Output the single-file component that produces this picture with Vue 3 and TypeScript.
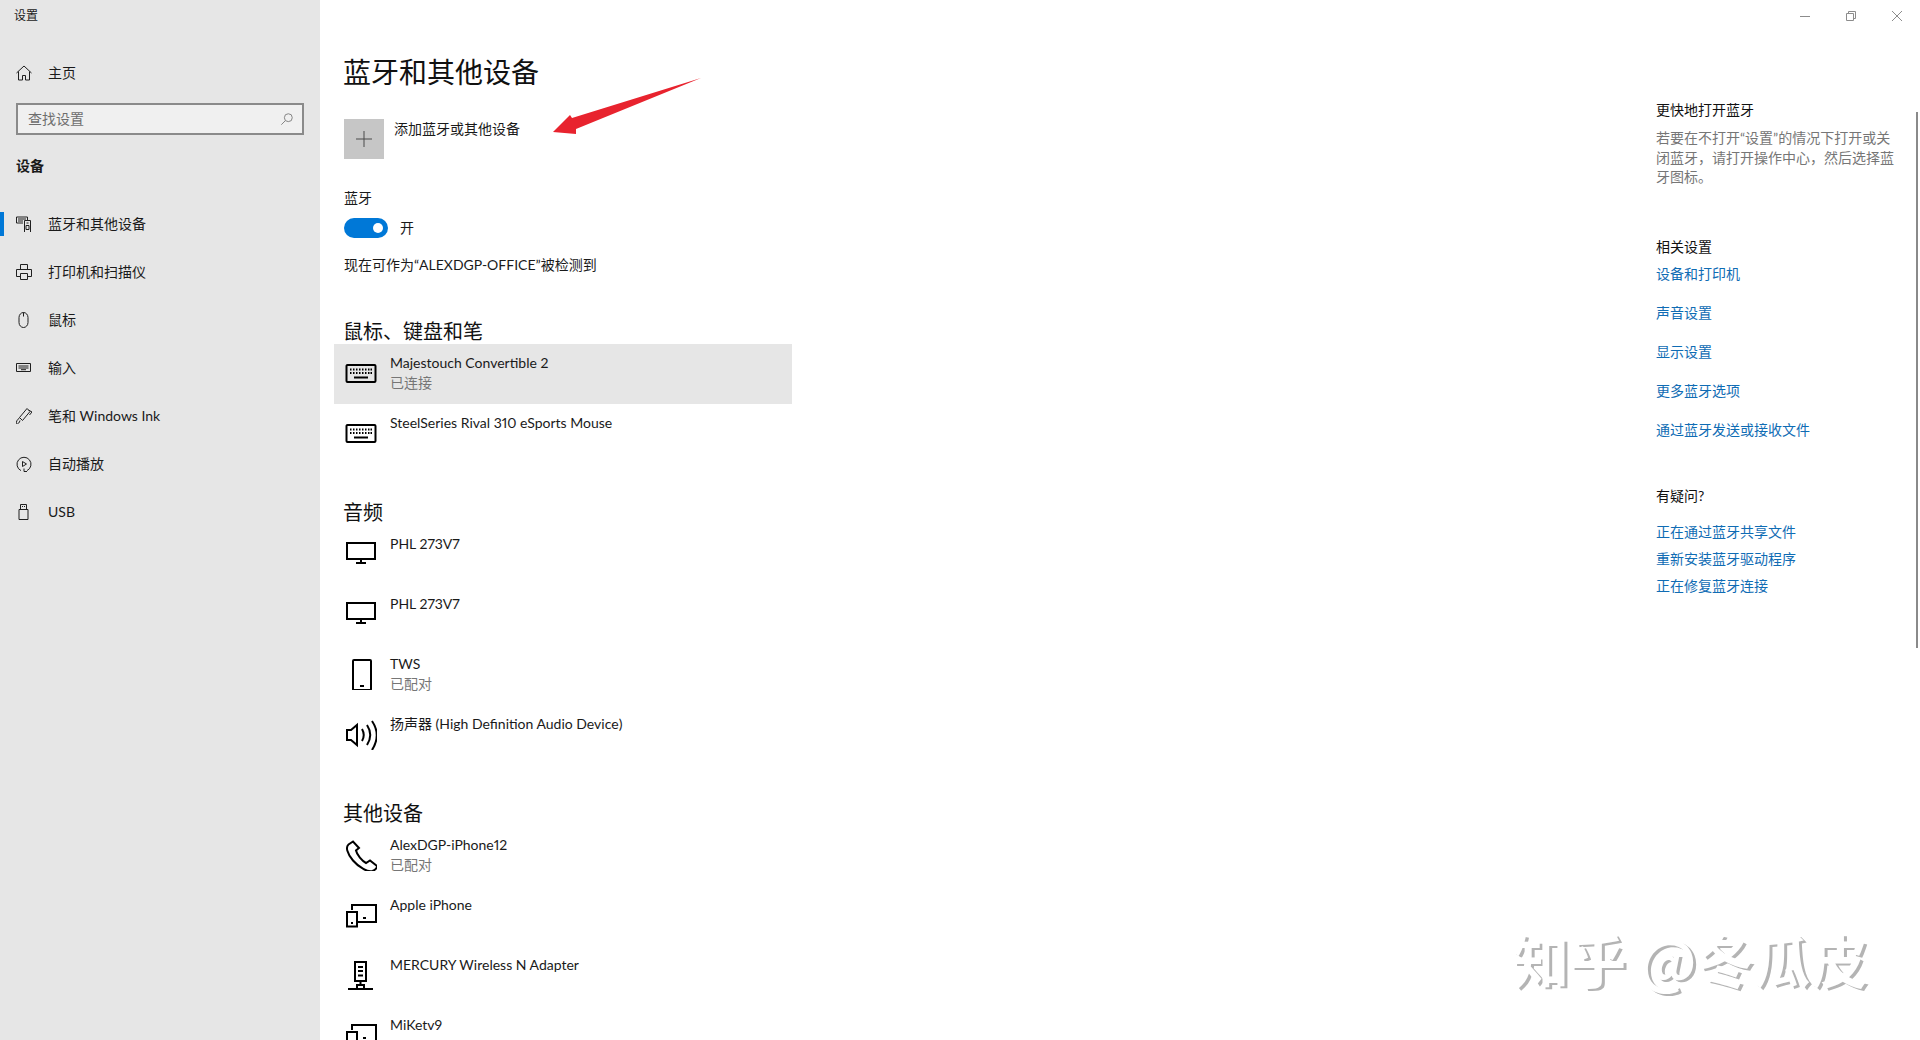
<template>
  <div class="window">
    <!-- 左侧导航 -->
    <aside class="sidebar">
      <div class="app-title">设置</div>
      <div class="nav-row home-row">
        <svg class="nav-icon" viewBox="0 0 16 16"><path v-for="d in navIcons.home" :key="d" :d="d" /></svg>
        <span>主页</span>
      </div>
      <div class="search-box">
        <input class="search-input" type="text" placeholder="查找设置" />
        <svg class="search-icon" viewBox="0 0 16 16">
          <circle cx="9.5" cy="6.5" r="4.5" />
          <path d="M6 10l-4.5 4.5" />
        </svg>
      </div>
      <div class="nav-group">设备</div>
      <nav class="nav-list">
        <div v-for="item in navItems" :key="item.label" :class="['nav-row', { 'nav-row--active': item.active }]">
          <svg class="nav-icon" viewBox="0 0 16 16"><path v-for="d in navIcons[item.icon]" :key="d" :d="d" /></svg>
          <span>{{ item.label }}</span>
        </div>
      </nav>
    </aside>

    <div class="content">
      <!-- 窗口按钮 -->
      <div class="caption">
        <div class="caption-btn"><svg viewBox="0 0 10 10"><path d="M0 5.5h10" /></svg></div>
        <div class="caption-btn"><svg viewBox="0 0 10 10"><path d="M.5 2.5h7v7h-7zM2.5 2.5v-2h7v7h-2" /></svg></div>
        <div class="caption-btn"><svg viewBox="0 0 10 10"><path d="M0 0l10 10M10 0L0 10" /></svg></div>
      </div>

      <div class="body">
        <main class="main">
          <h1 class="page-title">蓝牙和其他设备</h1>
          <div class="add-row">
            <div class="add-tile"><svg viewBox="0 0 16 16"><path d="M8 0v16M0 8h16" /></svg></div>
            <span>添加蓝牙或其他设备</span>
          </div>
          <div class="bt-label">蓝牙</div>
          <div class="toggle-row">
            <span class="toggle"><span class="toggle-knob"></span></span>
            <span>开</span>
          </div>
          <div class="discover">现在可作为“ALEXDGP-OFFICE”被检测到</div>

          <section v-for="group in groups" :key="group.title" class="group">
            <h2 class="group-title">{{ group.title }}</h2>
            <div
              v-for="(dev, i) in group.devices"
              :key="group.title + i"
              :class="['device', { 'device--selected': dev.selected }]"
            >
              <svg class="device-icon" viewBox="0 0 32 32"><path v-for="d in deviceIcons[dev.icon]" :key="d" :d="d" /></svg>
              <div class="device-text">
                <div>{{ dev.name }}</div>
                <div v-if="dev.status" class="device-status">{{ dev.status }}</div>
              </div>
            </div>
          </section>
        </main>

        <!-- 右侧相关信息 -->
        <aside class="side-info">
          <h3 class="info-title">更快地打开蓝牙</h3>
          <p class="info-desc">若要在不打开“设置”的情况下打开或关闭蓝牙，请打开操作中心，然后选择蓝牙图标。</p>
          <h3 class="info-title related-title">相关设置</h3>
          <a v-for="l in relatedLinks" :key="l" class="link link--wide">{{ l }}</a>
          <h3 class="info-title help-title">有疑问?</h3>
          <a v-for="l in helpLinks" :key="l" class="link link--tight">{{ l }}</a>
        </aside>
      </div>
      <div class="scrollbar"></div>
    </div>

    <!-- 标注箭头 -->
    <svg class="arrow" viewBox="0 0 150 60">
      <path d="M148 0L19 40 17 37 0 54 23 56 23 51Z" />
    </svg>
    <div class="watermark">知乎 @冬瓜皮</div>
  </div>
</template>

<script setup lang="ts">
interface Device {
  icon: string
  name: string
  status?: string
  selected?: boolean
}

const navIcons: Record<string, string[]> = {
  home: ['M.5 8L8 1l7.5 7', 'M2.5 6.5V15h4v-4.5h3V15h4V6.5'],
  devices: ['M7 7H.5V1h11v3', 'M2 3h8M2 5h5', 'M8.5 4.5h6v12h-6z', 'M10.5 7h2M10 9.5h3v4h-3z'],
  printer: ['M4.5 5.5v-5h7v5', 'M4.5 12.5H.5v-7h15v7h-4', 'M4.5 9.5h7v6h-7z'],
  mouse: ['M3 5.5a4.5 5 0 0 1 9 0v5a4.5 5 0 0 1-9 0z', 'M7.5 .5v4'],
  keyboard: ['M.5 3.5h14v8H.5z', 'M2.5 6h10M2.5 8h10', 'M5 9.7h5'],
  pen: ['M11 .5l3 3-7.5 9-3-3z', 'M12.5 2L16 4l-2.5 3', 'M3.5 10C1 11.5 0 14 .5 15.5s3-.5 3.5-3'],
  autoplay: ['M5 14.6a7 7 0 1 1 6 0', 'M6.5 5.5l4 2.5-4 2.5z', 'M8 12.5v3h3'],
  usb: ['M4.5 .5h6v5h-6z', 'M3 5.5h9v10H3z', 'M6 2.5h1M8 2.5h1'],
}

const deviceIcons: Record<string, string[]> = {
  keyboard: [
    'M2.5 8h27a1 1 0 0 1 1 1v15a1 1 0 0 1-1 1h-27a1 1 0 0 1-1-1V9a1 1 0 0 1 1-1z',
    'M5 12.5h1.5m1.5 0h1.5m1.5 0h1.5m1.5 0h1.5m1.5 0h1.5m1.5 0h1.5m1.5 0h1.5m1 0h1.5',
    'M5 16h1.5m1.5 0h1.5m1.5 0h1.5m1.5 0h1.5m1.5 0h1.5m1.5 0h1.5m1.5 0h1.5m1 0h1.5',
    'M9 20.5h14',
  ],
  monitor: ['M2 5h28v16H2z', 'M16 21v4', 'M11 25h10'],
  phone: ['M9 2h16a1 1 0 0 1 1 1v28a1 1 0 0 1-1 1H9a1 1 0 0 1-1-1V3a1 1 0 0 1 1-1z', 'M15 28h4'],
  speaker: ['M2 12h4l6-5v20l-6-5H2z', 'M17 11q3.5 6 0 12', 'M22 7q6.5 10 0 20', 'M27 3q9.5 14 0 29'],
  handset: [
    'M8 2.5L3.5 5.5C.5 8 2 14.5 8 21.5s15 12 19.5 10.5c2.5-1 4.5-3 4.5-5l-7-5.5-4 2.5c-4-2-9-8-10-12.5l3-2.5z',
  ],
  multi: ['M7 11V6h24v17H13', 'M2 13h10v14.5H2z', 'M18 19h3', 'M6 24h2'],
  tower: ['M10 3h11v19H10z', 'M13 8h5M13 12h5M13 16.5h5', 'M15.5 22v3', 'M12 26h7v4h-7z', 'M3 30h25'],
}

const navItems = [
  { label: '蓝牙和其他设备', icon: 'devices', active: true },
  { label: '打印机和扫描仪', icon: 'printer' },
  { label: '鼠标', icon: 'mouse' },
  { label: '输入', icon: 'keyboard' },
  { label: '笔和 Windows Ink', icon: 'pen' },
  { label: '自动播放', icon: 'autoplay' },
  { label: 'USB', icon: 'usb' },
]

const groups: { title: string; devices: Device[] }[] = [
  {
    title: '鼠标、键盘和笔',
    devices: [
      { icon: 'keyboard', name: 'Majestouch Convertible 2', status: '已连接', selected: true },
      { icon: 'keyboard', name: 'SteelSeries Rival 310 eSports Mouse' },
    ],
  },
  {
    title: '音频',
    devices: [
      { icon: 'monitor', name: 'PHL 273V7' },
      { icon: 'monitor', name: 'PHL 273V7' },
      { icon: 'phone', name: 'TWS', status: '已配对' },
      { icon: 'speaker', name: '扬声器 (High Definition Audio Device)' },
    ],
  },
  {
    title: '其他设备',
    devices: [
      { icon: 'handset', name: 'AlexDGP-iPhone12', status: '已配对' },
      { icon: 'multi', name: 'Apple iPhone' },
      { icon: 'tower', name: 'MERCURY Wireless N Adapter' },
      { icon: 'multi', name: 'MiKetv9' },
    ],
  },
]

const relatedLinks = ['设备和打印机', '声音设置', '显示设置', '更多蓝牙选项', '通过蓝牙发送或接收文件']
const helpLinks = ['正在通过蓝牙共享文件', '重新安装蓝牙驱动程序', '正在修复蓝牙连接']
</script>

<style>
html,
body {
  margin: 0;
  background: #fff;
  overflow: hidden;
}
</style>

<style scoped>
.window {
  position: relative;
  display: flex;
  height: 1040px;
  overflow: hidden;
  background: #fff;
  color: #1a1a1a;
  font-family: Lato, "Noto Sans CJK SC", sans-serif;
  font-size: 14px;
  line-height: 20px;
  font-variant-numeric: proportional-nums;
}

/* 左侧导航 */
.sidebar {
  flex: 0 0 320px;
  background: #e6e6e6;
}

.app-title {
  padding: 7px 0 0 14px;
  font-size: 12px;
  line-height: 18px;
}

.nav-row {
  position: relative;
  display: flex;
  align-items: center;
  gap: 16px;
  height: 48px;
  padding-left: 16px;
}

.home-row {
  margin-top: 24px;
}

.nav-row--active::before {
  content: '';
  position: absolute;
  left: 0;
  top: 12px;
  width: 4px;
  height: 24px;
  background: #0078d7;
}

.nav-icon {
  flex: none;
  width: 16px;
  height: 16px;
  fill: none;
  stroke: #1f1f1f;
  stroke-width: 1;
}

.search-box {
  display: flex;
  align-items: center;
  box-sizing: border-box;
  width: 288px;
  height: 32px;
  margin: 6px 0 0 16px;
  padding: 0 8px 0 10px;
  border: 2px solid #8a8a8a;
  background: #f0f0f0;
}

.search-input {
  flex: 1;
  min-width: 0;
  padding: 0;
  border: none;
  outline: none;
  background: transparent;
  font: inherit;
  color: #666;
}

.search-input::placeholder {
  color: #6e6e6e;
  opacity: 1;
}

.search-icon {
  width: 14px;
  height: 14px;
  fill: none;
  stroke: #777;
  stroke-width: 1;
}

.nav-group {
  margin: 21px 0 0 16px;
  font-weight: 700;
}

.nav-list {
  margin-top: 24px;
}

/* 主内容 */
.content {
  position: relative;
  flex: 1;
  min-width: 0;
}

.caption {
  display: flex;
  justify-content: flex-end;
  height: 32px;
}

.caption-btn {
  display: flex;
  align-items: center;
  justify-content: center;
  width: 46px;
}

.caption-btn svg {
  width: 10px;
  height: 10px;
  fill: none;
  stroke: #8c8c8c;
  stroke-width: 1;
}

.body {
  display: flex;
  justify-content: space-between;
  padding-left: 14px;
}

.main {
  width: 458px;
}

.page-title {
  margin: 18px 0 0 9px;
  font-size: 28px;
  line-height: 44px;
  font-weight: 400;
  color: #111;
}

.add-row {
  display: flex;
  align-items: flex-start;
  gap: 10px;
  margin: 25px 0 0 10px;
}

.add-tile {
  display: flex;
  align-items: center;
  justify-content: center;
  width: 40px;
  height: 40px;
  background: #c6c6c6;
}

.add-tile svg {
  width: 16px;
  height: 16px;
  fill: none;
  stroke: #4a4a4a;
  stroke-width: 1;
}

.bt-label {
  margin: 29px 0 0 10px;
}

.toggle-row {
  display: flex;
  align-items: center;
  gap: 12px;
  margin: 10px 0 0 10px;
}

.toggle {
  display: flex;
  align-items: center;
  justify-content: flex-end;
  box-sizing: border-box;
  width: 44px;
  height: 20px;
  padding-right: 5px;
  border-radius: 10px;
  background: #0078d7;
}

.toggle-knob {
  width: 10px;
  height: 10px;
  border-radius: 50%;
  background: #fff;
}

.discover {
  margin: 17px 0 0 10px;
}

.group {
  margin-top: 37px;
}

.group:first-of-type {
  margin-top: 44px;
}

.group-title {
  margin: 0 0 1px 9px;
  font-size: 20px;
  line-height: 24px;
  font-weight: 400;
  color: #111;
}

.device {
  display: flex;
  gap: 13px;
  box-sizing: border-box;
  height: 60px;
  padding: 9px 0 0 11px;
}

.group + .group {
  margin-top: 36px;
}

.device--selected {
  background: #e6e6e6;
}

.device-icon {
  flex: none;
  width: 32px;
  height: 32px;
  margin-top: 4px;
  fill: none;
  stroke: #000;
  stroke-width: 2;
}

.device-status {
  color: #767676;
}

/* 右侧信息栏 */
.side-info {
  width: 246px;
  padding-top: 68px;
  padding-right: 18px;
}

.info-title {
  margin: 0;
  font-size: 14px;
  line-height: 20px;
  font-weight: 400;
  color: #111;
}

.info-desc {
  margin: 8px 0 0;
  width: 240px;
  line-height: 19.5px;
  color: #767676;
}

.related-title {
  margin-top: 50px;
}

.help-title {
  margin-top: 27px;
}

.link {
  display: block;
  color: #0f6cb4;
}

.link--wide {
  height: 39px;
  line-height: 19px;
}

.related-title + .link--wide {
  margin-top: 7px;
}

.link--tight {
  height: 27px;
}

.help-title + .link--tight {
  margin-top: 16px;
}

.scrollbar {
  position: absolute;
  right: 2px;
  top: 112px;
  width: 2px;
  height: 536px;
  background: #8a8a8a;
}

/* 叠加层 */
.arrow {
  position: absolute;
  left: 553px;
  top: 78px;
  width: 150px;
  height: 60px;
  fill: #e8232e;
}

.watermark {
  position: absolute;
  left: 1512px;
  top: 922px;
  font-family: "Noto Sans CJK SC", sans-serif;
  font-size: 57px;
  line-height: 72px;
  font-weight: 700;
  white-space: nowrap;
  color: #fff;
  text-shadow: 3px 2px 0 #b4b4b4;
}
</style>
